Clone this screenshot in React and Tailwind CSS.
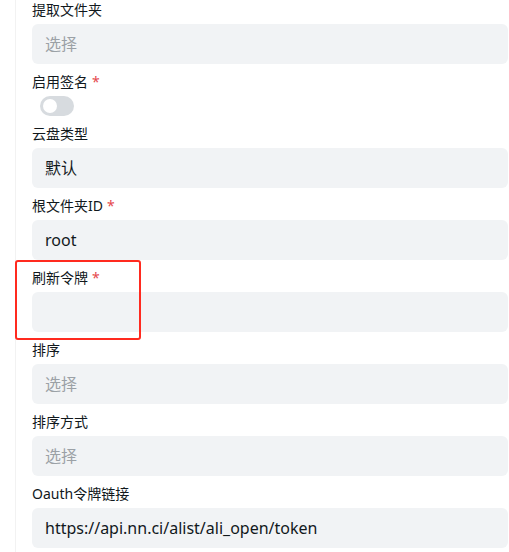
import React from 'react';

const fields = [
  { label: '提取文件夹', type: 'select', placeholder: '选择' },
  { label: '启用签名', required: true, type: 'switch' },
  { label: '云盘类型', type: 'select', value: '默认' },
  { label: '根文件夹ID', required: true, type: 'input', value: 'root' },
  { label: '刷新令牌', required: true, type: 'input', value: '', marked: true },
  { label: '排序', type: 'select', placeholder: '选择' },
  { label: '排序方式', type: 'select', placeholder: '选择' },
  { label: 'Oauth令牌链接', type: 'input', value: 'https://api.nn.ci/alist/ali_open/token' },
];

function Label({ text, required }) {
  return (
    <div className="flex items-center h-5 mb-1 text-sm leading-5 text-[#11181c]">
      <span>{text}</span>
      {required && <span className="ml-1 text-[#e5484d]">*</span>}
    </div>
  );
}

function Switch() {
  return (
    <div className="h-5 flex items-center pl-2">
      <div className="w-[34px] h-5 rounded-full bg-[#d7dbdf] flex items-center px-[3px]">
        <div className="w-[14px] h-[14px] rounded-full bg-white"></div>
      </div>
    </div>
  );
}

function Field({ field }) {
  let body;
  if (field.type === 'switch') {
    body = <Switch />;
  } else {
    let shown = field.value || field.placeholder || '';
    let color = field.value ? 'text-[#11181c]' : 'text-[#9ba1a6]';
    body = (
      <div className={`h-10 rounded-md bg-[#f1f3f5] flex items-center px-[13px] text-base ${color}`}>
        {shown}
      </div>
    );
  }

  return (
    <div className="relative">
      {field.marked && (
        <div className="absolute left-[-17px] top-[-8px] w-[126px] h-[80px] rounded-[3px] border-2 border-[#ff2a1f]"></div>
      )}
      <Label text={field.label} required={field.required} />
      {body}
    </div>
  );
}

export default function App() {
  return (
    <div
      className="w-[509px] h-[552px] overflow-hidden bg-white flex"
      style={{ fontFamily: '"Noto Sans", "Noto Sans CJK SC", sans-serif' }}
    >
      <div className="w-[16px] shrink-0 border-r border-[#f2f2f2]"></div>
      <div className="flex-1 flex flex-col gap-2 pl-4 pr-px">
        {fields.map((f) => (
          <Field key={f.label} field={f} />
        ))}
      </div>
    </div>
  );
}
